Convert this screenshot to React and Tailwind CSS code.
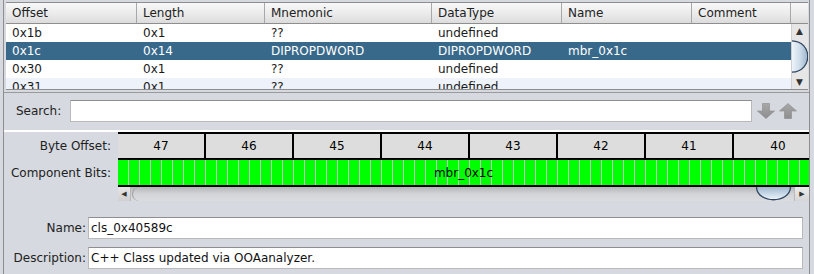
import React from "react";

const cols = [
  { name: "Offset", w: "w-[131px]" },
  { name: "Length", w: "w-[128px]" },
  { name: "Mnemonic", w: "w-[167px]" },
  { name: "DataType", w: "w-[130px]" },
  { name: "Name", w: "w-[130px]" },
  { name: "Comment", w: "w-[99px]" },
];

const rows = [
  { c: ["0x1b", "0x1", "??", "undefined", "", ""], bg: "bg-white" },
  { c: ["0x1c", "0x14", "DIPROPDWORD", "DIPROPDWORD", "mbr_0x1c", ""], bg: "bg-[#39698a] text-white" },
  { c: ["0x30", "0x1", "??", "undefined", "", ""], bg: "bg-white" },
  { c: ["0x31", "0x1", "??", "undefined", "", ""], bg: "bg-[#edf2fb]" },
];

const bytes = [47, 46, 45, 44, 43, 42, 41, 40];

function SearchArrow({ up }) {
  return (
    <svg width="18" height="16" viewBox="0 0 18 16">
      <defs>
        <linearGradient id={up ? "ga" : "gb"} x1="0" y1="0" x2="0" y2="1">
          <stop offset="0" stopColor="#a8a8a8" />
          <stop offset="1" stopColor="#8e8e8e" />
        </linearGradient>
      </defs>
      {up ? (
        <path d="M9 0.5 L17.5 8 L12.5 8 L12.5 15.5 L5.5 15.5 L5.5 8 L0.5 8 Z" fill={`url(#ga)`} stroke="#8a8a8a" strokeWidth="0.6" />
      ) : (
        <path d="M5.5 0.5 L12.5 0.5 L12.5 8 L17.5 8 L9 15.5 L0.5 8 L5.5 8 Z" fill={`url(#gb)`} stroke="#8a8a8a" strokeWidth="0.6" />
      )}
    </svg>
  );
}

function TextField({ value, w }) {
  return (
    <div className={`${w} h-[22px] bg-white border border-[#b9b9b9] border-t-[#8e8e8e] flex items-center pl-[2px] text-[12px] text-[#111] leading-none`}>
      {value}
    </div>
  );
}

export default function App() {
  return (
    <div className="w-[814px] h-[274px] bg-[#d6d9df] overflow-hidden font-['DejaVu_Sans',sans-serif] text-[12px] text-[#1a1a1a]">
      <div className="ml-[3px] w-[807px] h-[274px] border-x border-[#8e8e8e] flex flex-col">
        {/* table pane */}
        <div className="mt-[2px] ml-[2px] w-[802px] border-y border-[#8e8e8e] bg-white">
          <div className="flex h-[21px] border-b border-[#8e8e8e] bg-gradient-to-b from-[#f8f8f8] via-[#ececec] to-[#dcdcdc]">
            {cols.map((c) => (
              <div key={c.name} className={`${c.w} h-full border-r border-[#a8a8a8] pl-[6px] flex items-center leading-none text-[#222]`}>
                {c.name}
              </div>
            ))}
            <div className="w-[17px] h-full" />
          </div>
          <div className="flex h-[65px] overflow-hidden">
            <div className="flex flex-col">
              {rows.map((r, i) => (
                <div key={i} className={`flex h-[18px] shrink-0 ${r.bg}`}>
                  {r.c.map((t, j) => (
                    <div key={j} className={`${cols[j].w} pl-[6px] flex items-center leading-none whitespace-nowrap ${j === 0 ? "" : "pl-[5px]"}`}>
                      {t}
                    </div>
                  ))}
                </div>
              ))}
            </div>
            <div className="relative w-[17px] h-[65px] bg-[#e6e6e6] border-l border-[#cfcfcf] overflow-hidden">
              <div className="absolute top-[3px] left-[4px] text-[9px] leading-none text-[#333]">▲</div>
              <svg className="absolute left-0 top-[16px]" width="17" height="33" viewBox="0 0 17 33">
                <defs>
                  <linearGradient id="vt" x1="0" y1="0" x2="1" y2="0">
                    <stop offset="0" stopColor="#eef4fa" />
                    <stop offset="0.5" stopColor="#cddcea" />
                    <stop offset="1" stopColor="#9cb4cb" />
                  </linearGradient>
                </defs>
                <path d="M0 0.8 C 21 1.5, 21 31.5, 0 32.2 Z" fill="url(#vt)" />
                <path d="M0 0.8 C 21 1.5, 21 31.5, 0 32.2" fill="none" stroke="#2f4560" strokeWidth="1.3" />
              </svg>
              <div className="absolute bottom-[2px] left-[4px] text-[9px] leading-none text-[#333]">▼</div>
            </div>
          </div>
        </div>

        {/* search */}
        <div className="mt-[2px] h-px bg-[#9a9a9a]" />
        <div className="h-[37px] flex items-start pt-[7px]">
          <div className="w-[59px] pl-[12px] h-[22px] flex items-center leading-none text-[#222]">Search:</div>
          <div className="ml-[7px]">
            <TextField value="" w="w-[682px]" />
          </div>
          <div className="ml-[5px] mt-[3px] flex gap-[4px]">
            <SearchArrow />
            <SearchArrow up />
          </div>
        </div>
        <div className="h-[2px] bg-white" />

        {/* bits panel */}
        <div className="flex h-[69px]">
          <div className="w-[114px] flex flex-col items-end pr-[7px] text-[#222]">
            <div className="h-[2px]" />
            <div className="h-[24px] flex items-center leading-none">Byte Offset:</div>
            <div className="h-[2px]" />
            <div className="h-[25px] flex items-center leading-none">Component Bits:</div>
          </div>
          <div className="relative flex-1 overflow-hidden flex flex-col">
            <div className="w-[704px] flex flex-col">
              <div className="h-[2px] bg-black" />
              <div className="h-[24px] flex bg-[#dddddd]">
                {bytes.map((b, i) => (
                  <div key={b} className={`w-[88px] h-full flex items-center justify-center leading-none text-black ${i < 7 ? "border-r-2 border-black" : ""}`}>
                    {b}
                  </div>
                ))}
              </div>
              <div className="h-[2px] bg-black" />
              <div className="h-[25px] flex bg-[#00ff00]">
                {Array.from({ length: 64 }).map((_, i) => (
                  <div key={i} className="w-[11px] h-full border-r border-[#c4c4c4] shrink-0" />
                ))}
              </div>
              <div className="h-[2px] bg-black" />
            </div>
            <div className="absolute left-0 right-0 top-[28px] h-[25px] flex items-center justify-center leading-none text-black">
              mbr_0x1c
            </div>
            {/* horizontal scrollbar */}
            <div className="relative h-[14px] flex bg-gradient-to-b from-[#b3b5b9] via-[#d2d4d8] to-[#dadce0] overflow-hidden">
              <div className="w-[13px] h-full bg-gradient-to-b from-[#e6e6e6] to-[#d0d0d0] border-r border-[#b8b8b8] flex items-center justify-center text-[7px] leading-none text-[#333]">◀</div>
              <div className="flex-1 h-full rounded-l-[8px] border-l border-[#9a9a9a] ml-[1px]" />
              <svg className="absolute top-0 left-[638px]" width="36" height="14" viewBox="0 0 36 14">
                <defs>
                  <linearGradient id="ht" x1="0" y1="0" x2="0" y2="1">
                    <stop offset="0" stopColor="#9fb6cc" />
                    <stop offset="0.6" stopColor="#cfdeec" />
                    <stop offset="1" stopColor="#eef4fa" />
                  </linearGradient>
                </defs>
                <path d="M0.5 0 C 1 17, 34 17, 34.5 0 Z" fill="url(#ht)" />
                <path d="M0.5 0 C 1 17, 34 17, 34.5 0" fill="none" stroke="#2f4560" strokeWidth="1.3" />
              </svg>
              <div className="w-[15px] h-full bg-gradient-to-b from-[#ececec] to-[#d6d6d6] border-l border-[#b8b8b8] flex items-center justify-center text-[7px] leading-none text-[#333]">▶</div>
            </div>
          </div>
        </div>

        {/* name / description */}
        <div className="mt-[16px] flex items-center">
          <div className="w-[84px] pr-[2px] text-right leading-none text-[#222]">Name:</div>
          <TextField value="cls_0x40589c" w="w-[715px]" />
        </div>
        <div className="mt-[8px] flex items-center">
          <div className="w-[84px] pr-[2px] text-right leading-none text-[#222]">Description:</div>
          <TextField value="C++ Class updated via OOAanalyzer." w="w-[715px]" />
        </div>
      </div>
    </div>
  );
}
